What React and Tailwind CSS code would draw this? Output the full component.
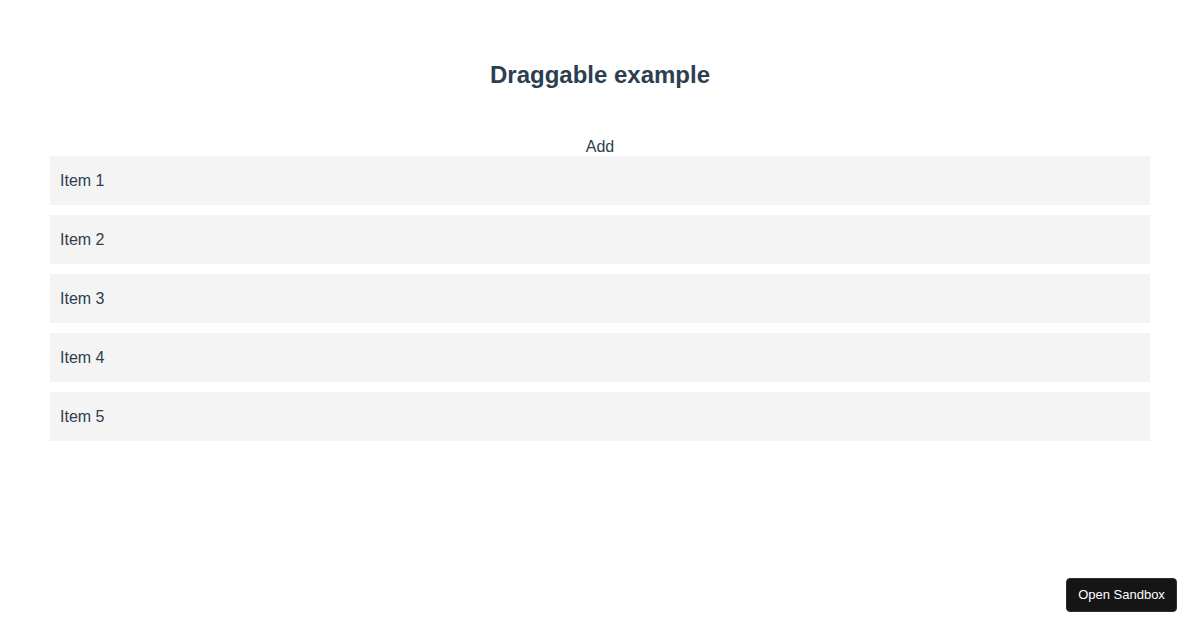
import React, { useState } from "react";

const App = () => {
  const [items, setItems] = useState([1, 2, 3, 4, 5]);

  const handleAdd = () => {
    setItems((prev) => [...prev, prev.length + 1]);
  };

  return (
    <div
      className="relative w-[1200px] h-[630px] bg-white text-[#2c3e50]"
      style={{ fontFamily: '"Liberation Sans", Arial, sans-serif' }}
    >
      <div className="px-[50px] pt-[61px]">
        <h2 className="text-center text-[24px] leading-[28px] font-bold">Draggable example</h2>
        <div className="mt-[49px] flex justify-center">
          <button onClick={handleAdd} className="text-[16px] leading-[18px] bg-transparent p-0">
            Add
          </button>
        </div>
        <div className="flex flex-col gap-[10px]">
          {items.map((n) => (
            <div key={n} className="h-[49px] flex items-center px-[10px] bg-[#f4f4f4] text-[16px]">
              Item {n}
            </div>
          ))}
        </div>
      </div>

      <button className="absolute left-[1066px] top-[578px] w-[111px] h-[34px] rounded-[4px] bg-[#151515] border border-[#2a2f36] text-white text-[13px] flex items-center justify-center">
        Open Sandbox
      </button>
    </div>
  );
};

export default App;
